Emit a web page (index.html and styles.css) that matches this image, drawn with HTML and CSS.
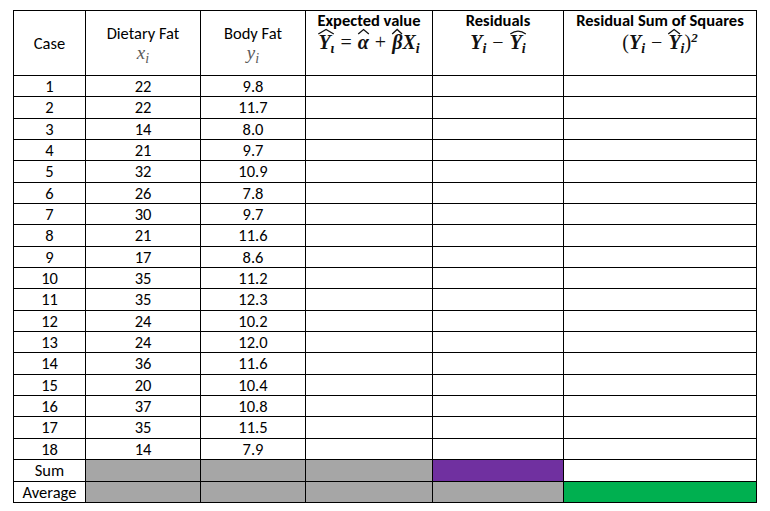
FILE: index.html
```html
<!DOCTYPE html>
<html>
<head>
<meta charset="utf-8">
<link rel="stylesheet" href="styles.css">
</head>
<body>
<table class="grid">
  <colgroup>
    <col class="c1"><col class="c2"><col class="c3"><col class="c4"><col class="c5"><col class="c6">
  </colgroup>
  <thead>
    <tr class="head">
      <th class="mid">Case</th>
      <th class="mid"><div>Dietary Fat</div><div class="var">x<sub>i</sub></div></th>
      <th class="mid"><div>Body Fat</div><div class="var">y<sub>i</sub></div></th>
      <th class="top"><div class="bt">Expected value</div>
        <div class="math"><span class="hat">Y<sub>ι</sub><svg viewBox="0 0 100 10" preserveAspectRatio="none"><polyline points="2,10 50,1 98,10"/></svg></span><span class="op">=</span><span class="hat">α<svg viewBox="0 0 100 10" preserveAspectRatio="none"><polyline points="2,10 50,1 98,10"/></svg></span><span class="op">+</span><span class="hat">β<svg viewBox="0 0 100 10" preserveAspectRatio="none"><polyline points="2,10 50,1 98,10"/></svg></span>X<sub>i</sub></div></th>
      <th class="top"><div class="bt">Residuals</div>
        <div class="math">Y<sub>i</sub><span class="op">−</span><span class="hat wide">Y<sub>i</sub><svg viewBox="0 0 100 10" preserveAspectRatio="none"><path d="M2,10 Q50,-4 98,10"/></svg></span></div></th>
      <th class="top"><div class="bt">Residual Sum of Squares</div>
        <div class="math"><span class="up">(</span>Y<sub>i</sub><span class="op">−</span><span class="hat">Y<svg viewBox="0 0 100 10" preserveAspectRatio="none"><polyline points="2,10 50,1 98,10"/></svg></span><sub>i</sub><span class="up">)</span><sup>2</sup></div></th>
    </tr>
  </thead>
  <tbody>
    <tr><td>1</td><td>22</td><td>9.8</td><td></td><td></td><td></td></tr>
    <tr><td>2</td><td>22</td><td>11.7</td><td></td><td></td><td></td></tr>
    <tr><td>3</td><td>14</td><td>8.0</td><td></td><td></td><td></td></tr>
    <tr><td>4</td><td>21</td><td>9.7</td><td></td><td></td><td></td></tr>
    <tr><td>5</td><td>32</td><td>10.9</td><td></td><td></td><td></td></tr>
    <tr><td>6</td><td>26</td><td>7.8</td><td></td><td></td><td></td></tr>
    <tr><td>7</td><td>30</td><td>9.7</td><td></td><td></td><td></td></tr>
    <tr><td>8</td><td>21</td><td>11.6</td><td></td><td></td><td></td></tr>
    <tr><td>9</td><td>17</td><td>8.6</td><td></td><td></td><td></td></tr>
    <tr><td>10</td><td>35</td><td>11.2</td><td></td><td></td><td></td></tr>
    <tr><td>11</td><td>35</td><td>12.3</td><td></td><td></td><td></td></tr>
    <tr><td>12</td><td>24</td><td>10.2</td><td></td><td></td><td></td></tr>
    <tr><td>13</td><td>24</td><td>12.0</td><td></td><td></td><td></td></tr>
    <tr><td>14</td><td>36</td><td>11.6</td><td></td><td></td><td></td></tr>
    <tr><td>15</td><td>20</td><td>10.4</td><td></td><td></td><td></td></tr>
    <tr><td>16</td><td>37</td><td>10.8</td><td></td><td></td><td></td></tr>
    <tr><td>17</td><td>35</td><td>11.5</td><td></td><td></td><td></td></tr>
    <tr><td>18</td><td>14</td><td>7.9</td><td></td><td></td><td></td></tr>
    <tr class="sum"><td>Sum</td><td class="grey"></td><td class="grey"></td><td class="grey"></td><td class="purple"></td><td></td></tr>
    <tr class="avg"><td>Average</td><td class="grey"></td><td class="grey"></td><td class="grey"></td><td class="grey"></td><td class="green"></td></tr>
  </tbody>
</table>
</body>
</html>
```
FILE: styles.css
```css
html, body {
  margin: 0;
  background: #ffffff;
}
body {
  font-family: Carlito, Calibri, Lato, "Open Sans", sans-serif;
  font-size: 16.5px;
  color: #000;
}
.grid {
  border-collapse: collapse;
  table-layout: fixed;
  width: 743px;
  margin: 10px 0 0 13px;
}
.c1 { width: 72px; }
.c2 { width: 115px; }
.c3 { width: 105px; }
.c4 { width: 127px; }
.c5 { width: 131px; }
.c6 { width: 193px; }
.grid th, .grid td {
  border: 1px solid #000;
  padding: 0;
  text-align: center;
  line-height: 18px;
  white-space: nowrap;
}
.grid th {
  font-weight: normal;
}
.head { height: 65px; }
.mid { vertical-align: middle; }
.top { vertical-align: top; padding-top: 2px; }
.var {
  font-family: "Liberation Serif", "DejaVu Serif", serif;
  font-style: italic;
  font-size: 19px;
  color: #5a5a5a;
  line-height: 18px;
  margin-top: 2px;
}
.var sub, .math sub {
  font-size: 14px;
  vertical-align: -4px;
  line-height: 0;
}
.bt {
  font-weight: bold;
  line-height: 18px;
}
.math {
  font-family: "Liberation Serif", "DejaVu Serif", serif;
  font-style: italic;
  font-weight: bold;
  font-size: 20px;
  line-height: 22px;
  margin-top: 2px;
  color: #111;
}
.op {
  display: inline-block;
  font-style: normal;
  font-weight: normal;
  margin: 0 6px;
}
.up {
  font-style: normal;
  font-weight: normal;
}
.math sup {
  font-size: 13px;
  vertical-align: 7px;
  line-height: 0;
}
.hat {
  position: relative;
  display: inline-block;
}
.hat svg {
  position: absolute;
  left: 0;
  top: -2px;
  width: 100%;
  height: 5px;
  overflow: visible;
}
.hat polyline, .hat path {
  fill: none;
  stroke: #111;
  stroke-width: 1.3;
  vector-effect: non-scaling-stroke;
}
.hat.wide svg { top: -1px; height: 4px; }
tbody tr { height: 21.33px; }
tbody tr.sum { height: 22px; }
tbody tr.avg { height: 21px; }
.grey { background: #a6a6a6; }
.purple { background: #7030a0; }
.green { background: #00b050; }
```
